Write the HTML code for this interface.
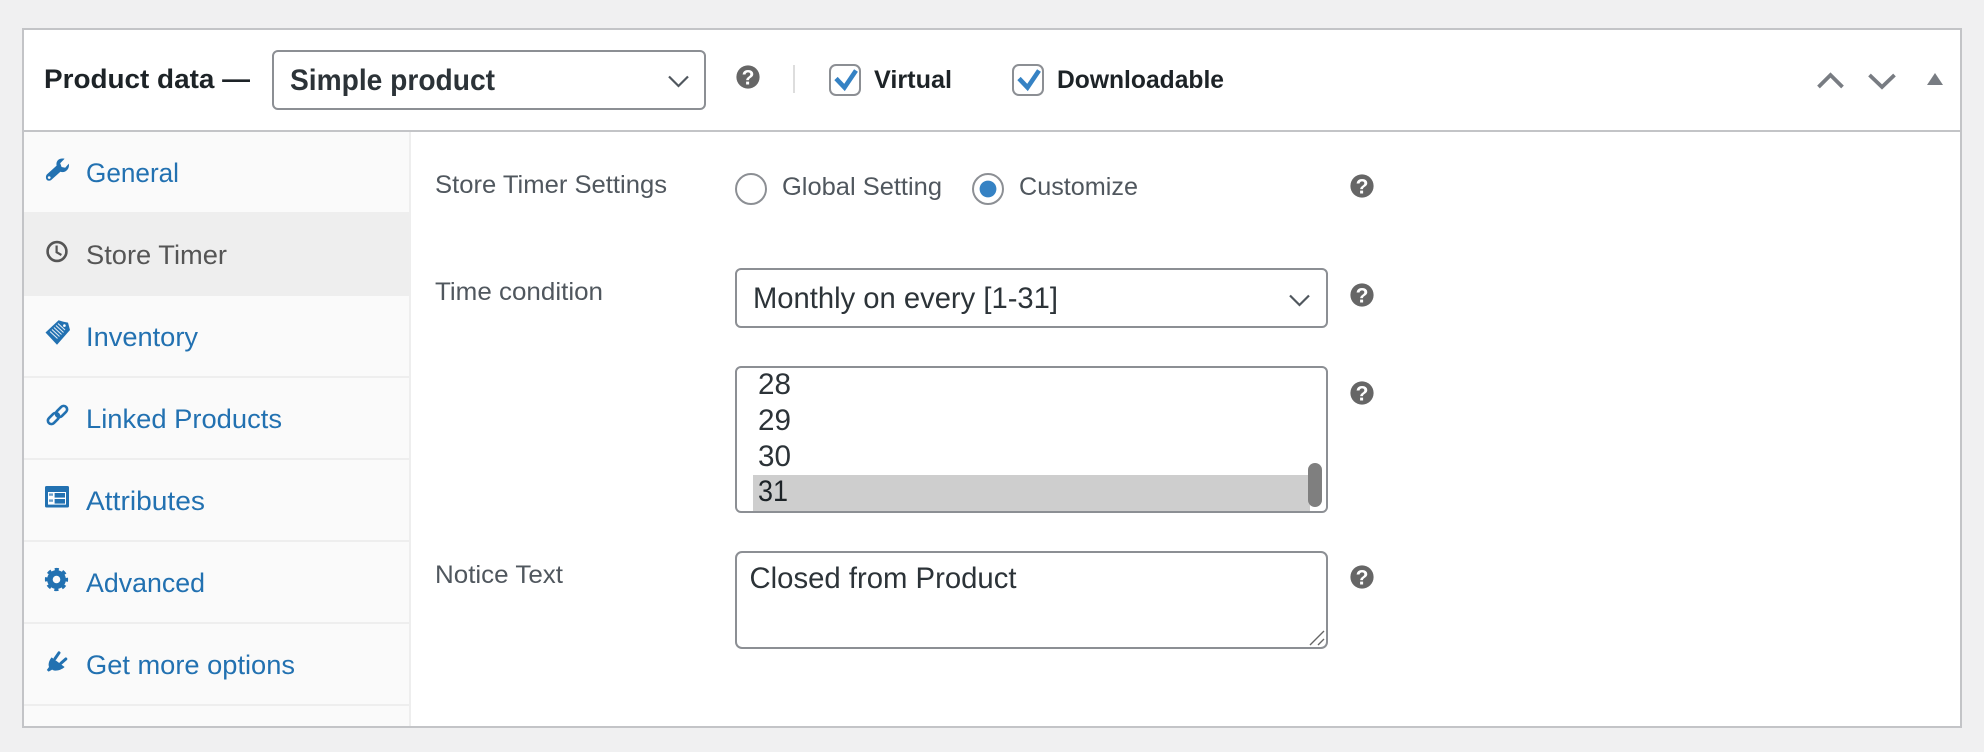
<!DOCTYPE html>
<html><head><meta charset="utf-8"><title>Product data</title>
<style>
html,body{margin:0;padding:0;background:#f0f0f1;width:1984px;height:752px;overflow:hidden}
svg{display:block}
text{font-family:"Liberation Sans",sans-serif}
.l{fill:#2271b1;font-size:27px}
.g{fill:#50575e;font-size:25px}
.d{fill:#2c3338;font-size:29.5px}
.b{fill:#1d2327;font-weight:bold;font-size:25px}
.q{fill:#fff;font-weight:bold;font-size:21px;text-anchor:middle}
</style></head><body>
<svg width="1984" height="752" viewBox="0 0 1984 752" xmlns="http://www.w3.org/2000/svg">
<rect width="1984" height="752" fill="#f0f0f1"/>
<rect x="23" y="29" width="1938" height="698" fill="#fff" stroke="#c3c4c7" stroke-width="2"/>
<rect x="24" y="130" width="1936" height="2" fill="#c3c4c7"/>

<!-- sidebar -->
<rect x="24" y="132" width="385" height="594" fill="#fafafa"/>
<rect x="409" y="132" width="2" height="594" fill="#eee"/>
<rect x="24" y="212" width="387" height="84" fill="#eee"/>
<rect x="24" y="376" width="385" height="2" fill="#eee"/>
<rect x="24" y="458" width="385" height="2" fill="#eee"/>
<rect x="24" y="540" width="385" height="2" fill="#eee"/>
<rect x="24" y="622" width="385" height="2" fill="#eee"/>
<rect x="24" y="704" width="385" height="2" fill="#eee"/>

<text class="l" x="86" y="182" textLength="93" lengthAdjust="spacingAndGlyphs">General</text>
<text x="86" y="264" font-size="27" fill="#555" textLength="141" lengthAdjust="spacingAndGlyphs">Store Timer</text>
<text class="l" x="86" y="346" textLength="112" lengthAdjust="spacingAndGlyphs">Inventory</text>
<text class="l" x="86" y="428" textLength="196" lengthAdjust="spacingAndGlyphs">Linked Products</text>
<text class="l" x="86" y="510" textLength="119" lengthAdjust="spacingAndGlyphs">Attributes</text>
<text class="l" x="86" y="592" textLength="119" lengthAdjust="spacingAndGlyphs">Advanced</text>
<text class="l" x="86" y="674" textLength="209" lengthAdjust="spacingAndGlyphs">Get more options</text>

<!-- wrench -->
<path fill="#2271b1" fill-rule="evenodd" d="M46.8 174.5 L56.6 165.6 C55.6 161 59.2 157.6 64.6 158.8 L60.2 163.2 L61.6 167 L65.2 167.8 L68.8 163.6 C70 169 65.2 173.4 60.4 171.8 L51.2 180 C49.6 181.2 47.6 180.8 46.6 179.6 C45.6 178 45.8 175.8 46.8 174.5Z M49.2 176.2 a1.4 1.4 0 1 0 .01 0Z"/>
<!-- clock -->
<circle cx="57" cy="251.5" r="9.4" fill="none" stroke="#555" stroke-width="2.6"/>
<path d="M56.6 245.5 V252.2 L61.4 255" fill="none" stroke="#555" stroke-width="2.2"/>
<!-- tag -->
<path fill="#2271b1" d="M45.5 332.5 L58.6 320.2 L63 321.6 L68 322.6 L70 330 L57 344.8 Z"/>
<path stroke="#dfeaf3" stroke-width="1.1" fill="none" d="M50 331.5 L57.5 338.5 M52 329.5 L59.5 336.5 M54 327.5 L61.5 334.5 M56 325.5 L63.5 332.5 M58 323.5 L65 330"/>
<circle cx="64.4" cy="325.6" r="1.3" fill="#fff"/>
<!-- link -->
<g fill="none" stroke="#2271b1" stroke-width="2.6">
<rect x="-6.5" y="-3.5" width="13" height="7" rx="3.5" transform="translate(53.5 418.5) rotate(-45)"/>
<rect x="-6.5" y="-3.5" width="13" height="7" rx="3.5" transform="translate(61.5 411.5) rotate(-45)"/>
</g>
<!-- table -->
<rect x="45" y="486" width="24" height="21.5" rx="1.5" fill="#2271b1"/>
<rect x="48" y="492" width="18" height="12.6" fill="#fff"/>
<rect x="49" y="493.4" width="4" height="2.4" fill="#6a9fca"/>
<rect x="49" y="499.4" width="4" height="2.4" fill="#6a9fca"/>
<rect x="54.6" y="493" width="10.4" height="4.6" fill="#2271b1"/>
<rect x="54.6" y="499" width="10.4" height="4.6" fill="#2271b1"/>
<!-- gear -->
<circle cx="56.5" cy="579.5" r="6.6" fill="none" stroke="#2271b1" stroke-width="5.6"/>
<circle cx="56.5" cy="579.5" r="10.2" fill="none" stroke="#2271b1" stroke-width="2.8" stroke-dasharray="4.2 3.81" stroke-dashoffset="2.1"/>
<!-- plug -->
<path fill="#2271b1" d="M51.6 657.4 L64.6 667 C60.6 670.6 54.8 671.6 52.2 669.6 L48.6 671.6 L46.8 670 L49 667 C47.8 663.6 49.6 659.8 51.6 657.4Z"/>
<path stroke="#2271b1" stroke-width="3" stroke-linecap="round" d="M55 658.6 L59 652.8 M60.8 663.4 L65.8 659"/>

<!-- header -->
<text x="44" y="88" font-size="27" font-weight="bold" fill="#1d2327" textLength="206" lengthAdjust="spacingAndGlyphs">Product data —</text>
<rect x="273" y="51" width="432" height="58" rx="5" fill="#fff" stroke="#8c8f94" stroke-width="2"/>
<text x="290" y="90" font-size="29.5" font-weight="bold" fill="#2c3338" textLength="205" lengthAdjust="spacingAndGlyphs">Simple product</text>
<path d="M669 76.5 L678.5 86 L688 76.5" fill="none" stroke="#50575e" stroke-width="2.2"/>

<circle cx="748" cy="77" r="11.6" fill="#666"/><text class="q" x="748" y="84.5">?</text>
<rect x="793" y="65" width="2" height="28" fill="#ddd"/>

<rect x="830" y="65" width="30" height="30" rx="6" fill="#fff" stroke="#8c8f94" stroke-width="2"/>
<path d="M836 78.5 L844.5 87.5 L856 70.5" fill="none" stroke="#3582c4" stroke-width="4.6"/>
<text class="b" x="874" y="88" textLength="78" lengthAdjust="spacingAndGlyphs">Virtual</text>
<rect x="1013" y="65" width="30" height="30" rx="6" fill="#fff" stroke="#8c8f94" stroke-width="2"/>
<path d="M1019 78.5 L1027.5 87.5 L1039 70.5" fill="none" stroke="#3582c4" stroke-width="4.6"/>
<text class="b" x="1057" y="88" textLength="167" lengthAdjust="spacingAndGlyphs">Downloadable</text>

<path d="M1818.5 87 L1830.5 75 L1842.5 87" fill="none" stroke="#787c82" stroke-width="3.8"/>
<path d="M1869.5 75 L1882 87 L1894.5 75" fill="none" stroke="#787c82" stroke-width="3.8"/>
<path d="M1927 85 L1935 73 L1943 85Z" fill="#787c82"/>

<!-- form -->
<text class="g" x="435" y="193" textLength="232" lengthAdjust="spacingAndGlyphs">Store Timer Settings</text>
<text class="g" x="435" y="300" textLength="168" lengthAdjust="spacingAndGlyphs">Time condition</text>
<text class="g" x="435" y="583" textLength="128" lengthAdjust="spacingAndGlyphs">Notice Text</text>

<circle cx="751" cy="189" r="15" fill="#fff" stroke="#8c8f94" stroke-width="2"/>
<text class="g" x="782" y="195" textLength="160" lengthAdjust="spacingAndGlyphs">Global Setting</text>
<circle cx="988" cy="189" r="15" fill="#fff" stroke="#8c8f94" stroke-width="2"/>
<circle cx="988" cy="189" r="8.4" fill="#3582c4"/>
<text class="g" x="1019" y="195" textLength="119" lengthAdjust="spacingAndGlyphs">Customize</text>

<circle cx="1362" cy="186" r="11.6" fill="#666"/><text class="q" x="1362" y="193.5">?</text>
<circle cx="1362" cy="295" r="11.6" fill="#666"/><text class="q" x="1362" y="302.5">?</text>
<circle cx="1362" cy="393" r="11.6" fill="#666"/><text class="q" x="1362" y="400.5">?</text>
<circle cx="1362" cy="577" r="11.6" fill="#666"/><text class="q" x="1362" y="584.5">?</text>

<rect x="736" y="269" width="591" height="58" rx="5" fill="#fff" stroke="#8c8f94" stroke-width="2"/>
<text class="d" x="753" y="308" textLength="305" lengthAdjust="spacingAndGlyphs">Monthly on every [1-31]</text>
<path d="M1290 295.5 L1299.5 305 L1309 295.5" fill="none" stroke="#50575e" stroke-width="2.2"/>

<rect x="736" y="367" width="591" height="145" rx="5" fill="#fff" stroke="#8c8f94" stroke-width="2"/>
<rect x="753" y="475" width="557" height="36" fill="#cecece"/>
<text class="d" x="758" y="394" textLength="33" lengthAdjust="spacingAndGlyphs">28</text>
<text class="d" x="758" y="430" textLength="33" lengthAdjust="spacingAndGlyphs">29</text>
<text class="d" x="758" y="466" textLength="33" lengthAdjust="spacingAndGlyphs">30</text>
<text x="758" y="501" font-size="29.5" fill="#1d2327" textLength="30" lengthAdjust="spacingAndGlyphs">31</text>
<rect x="1308" y="463" width="14" height="44" rx="7" fill="#7f7f7f"/>

<rect x="736" y="552" width="591" height="96" rx="6" fill="#fff" stroke="#8c8f94" stroke-width="2"/>
<text class="d" x="749.5" y="588" textLength="267" lengthAdjust="spacingAndGlyphs">Closed from Product</text>
<path d="M1310 645 L1324 631 M1318 645 L1324 639" stroke="#666" stroke-width="1.4" fill="none"/>
</svg>
</body></html>
